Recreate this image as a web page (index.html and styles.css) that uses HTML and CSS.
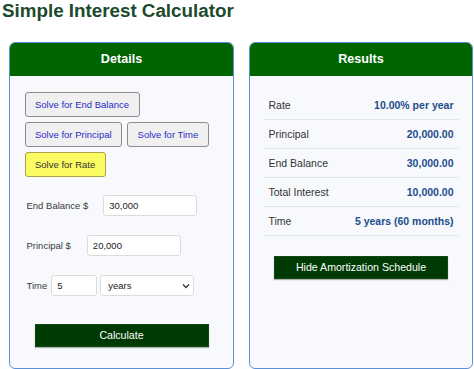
FILE: index.html
```html
<!DOCTYPE html>
<html lang="en">
<head>
<meta charset="utf-8">
<title>Simple Interest Calculator</title>
<link rel="stylesheet" href="styles.css">
</head>
<body>
<h1 class="title">Simple Interest Calculator</h1>
<div class="cards">
  <section class="card">
    <div class="card-head">Details</div>
    <div class="card-body details">
      <div class="solve-group">
        <div class="solve-row"><button class="solve">Solve for End Balance</button></div>
        <div class="solve-row"><button class="solve">Solve for Principal</button><button class="solve">Solve for Time</button></div>
        <div class="solve-row"><button class="solve active">Solve for Rate</button></div>
      </div>
      <div class="field-row">
        <label class="lbl lbl-end">End Balance $</label>
        <input class="inp" type="text" value="30,000">
      </div>
      <div class="field-row">
        <label class="lbl lbl-prin">Principal $</label>
        <input class="inp" type="text" value="20,000">
      </div>
      <div class="field-row">
        <label class="lbl lbl-time">Time</label>
        <input class="inp inp-small" type="text" value="5">
        <div class="sel-wrap">
          <select class="sel"><option>years</option><option>months</option></select>
          <svg class="chev" width="8" height="6" viewBox="0 0 8 6"><path d="M1 1.5 L4 4.5 L7 1.5" fill="none" stroke="#333" stroke-width="1.3"/></svg>
        </div>
      </div>
      <div class="action"><button class="btn-dark">Calculate</button></div>
    </div>
  </section>
  <section class="card">
    <div class="card-head">Results</div>
    <div class="card-body results">
      <div class="res-row res-first"><span class="res-lbl">Rate</span><span class="res-val">10.00% per year</span></div>
      <div class="res-row"><span class="res-lbl">Principal</span><span class="res-val">20,000.00</span></div>
      <div class="res-row"><span class="res-lbl">End Balance</span><span class="res-val">30,000.00</span></div>
      <div class="res-row"><span class="res-lbl">Total Interest</span><span class="res-val">10,000.00</span></div>
      <div class="res-row"><span class="res-lbl">Time</span><span class="res-val">5 years (60 months)</span></div>
      <div class="action action-res"><button class="btn-dark">Hide Amortization Schedule</button></div>
    </div>
  </section>
</div>
</body>
</html>
```
FILE: styles.css
```css
html, body {
  margin: 0;
  padding: 0;
  background: #ffffff;
  font-family: "Liberation Sans", Arial, sans-serif;
  overflow: hidden;
}

.title {
  margin: 0;
  padding-left: 2px;
  font-size: 18.8px;
  line-height: 22px;
  font-weight: bold;
  color: #1c4a2c;
}

.cards {
  display: flex;
  gap: 15px;
  margin-top: 20px;
  padding-left: 9px;
}

.card {
  box-sizing: border-box;
  width: 225px;
  height: 327px;
  border: 1.5px solid #5d8fd4;
  border-radius: 6px;
  background: #f7f9fc;
  overflow: hidden;
  display: flex;
  flex-direction: column;
}
.card + .card { width: 224px; }

.card-head {
  height: 32.5px;
  background: #006400;
  color: #ffffff;
  font-weight: bold;
  font-size: 12.6px;
  display: flex;
  align-items: center;
  justify-content: center;
}

.details {
  padding: 16px 14.5px 0;
}

.solve-group {
  display: flex;
  flex-direction: column;
  gap: 5px;
}
.solve-row {
  display: flex;
  gap: 5px;
}
.solve {
  height: 25px;
  padding: 0 9.5px;
  border: 1px solid #8c8c8c;
  border-radius: 3px;
  background: #f0f0f0;
  color: #2b2bc8;
  font-family: "Liberation Sans", Arial, sans-serif;
  font-size: 9.5px;
  cursor: pointer;
}
.solve.active {
  background: #fbfb62;
  border-color: #a8a24a;
  color: #333333;
}

.field-row {
  display: flex;
  align-items: center;
  height: 21px;
  margin-top: 19px;
}
.solve-group + .field-row { margin-top: 18px; }

.lbl {
  font-size: 9.5px;
  color: #3a3a3a;
  padding-left: 2px;
}
.lbl-end { margin-right: 15px; }
.lbl-prin { margin-right: 16px; }
.lbl-time { margin-right: 4px; }

.inp {
  box-sizing: border-box;
  width: 94px;
  height: 21px;
  border: 1px solid #dcdcdc;
  border-radius: 3px;
  background: #ffffff;
  padding: 0 5px;
  font-family: "Liberation Sans", Arial, sans-serif;
  font-size: 9.5px;
  color: #222;
  outline: none;
}
.inp-small { width: 46px; }

.sel-wrap {
  position: relative;
  margin-left: 3px;
}
.sel {
  box-sizing: border-box;
  width: 94px;
  height: 21px;
  border: 1px solid #dcdcdc;
  border-radius: 3px;
  background: #ffffff;
  padding: 0 7px;
  font-family: "Liberation Sans", Arial, sans-serif;
  font-size: 9.5px;
  color: #222;
  appearance: none;
  -webkit-appearance: none;
  outline: none;
}
.chev {
  position: absolute;
  right: 4px;
  top: 8px;
  pointer-events: none;
}

.action {
  display: flex;
  justify-content: center;
  margin-top: 28px;
}
.action-res { margin-top: 20px; }

.btn-dark {
  width: 174px;
  height: 23px;
  border: 1px solid #0f4a12;
  background: #003a03;
  color: #ffffff;
  font-family: "Liberation Sans", Arial, sans-serif;
  font-size: 10.6px;
  box-shadow: 0 1px 1px rgba(0,0,0,0.3);
  cursor: pointer;
}

.results {
  padding: 15px 13.5px 0;
}
.res-row {
  display: flex;
  justify-content: space-between;
  align-items: center;
  height: 28px;
  padding: 0 5px;
  border-bottom: 1px solid #e1e5ea;
  font-size: 10.5px;
}
.res-first { height: 29px; padding-top: 1px; box-sizing: border-box; }
.res-lbl { color: #333333; }
.res-val { color: #1e4d8c; font-weight: bold; }
```
